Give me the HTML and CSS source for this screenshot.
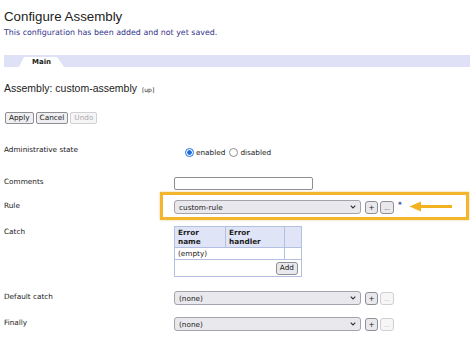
FILE: index.html
```html
<!DOCTYPE html>
<html>
<head>
    <title>Configure Assembly</title>
    <meta name="viewport" content="width=device-width, initial-scale=1">
    <link rel="stylesheet" href="styles.css">
</head>
<body>
    <h1>Configure Assembly</h1>
    <div class="notice">This configuration has been added and not yet saved.</div>

    <div class="tabs">
        <div class="tab">Main</div>
    </div>

    <h2>Assembly: custom-assembly <a href="#" class="up">[up]</a></h2>

    <div class="actions">
        <button>Apply</button>
        <button>Cancel</button>
        <button disabled>Undo</button>
    </div>

    <div class="form">
        <div class="row state">
            <label>Administrative state</label>
            <div class="value radios">
                <label class="radio"><input type="radio" name="state" checked>enabled</label>
                <label class="radio"><input type="radio" name="state">disabled</label>
            </div>
        </div>

        <div class="row">
            <label>Comments</label>
            <div class="value"><input type="text" class="text"></div>
        </div>

        <div class="row rule">
            <label>Rule</label>
            <div class="value pick marked">
                <div class="select">
                    <select><option>custom-rule</option></select>
                    <svg class="chevron" width="6" height="4" viewBox="0 0 6 4"><path d="M0.7 0.7 L3 3 L5.3 0.7" fill="none" stroke="#333" stroke-width="1.1"/></svg>
                </div>
                <button class="small">+</button>
                <button class="small wide">...</button>
                <span class="req">*</span>
                <div class="callout"></div>
                <svg class="arrow" width="44" height="11" viewBox="0 0 44 11">
                    <path d="M0.5 5.5 L12 0.5 L12 4 L43 4 L43 7 L12 7 L12 10.5 Z" fill="#f2b21f"/>
                </svg>
            </div>
        </div>

        <div class="row catch">
            <label>Catch</label>
            <div class="value">
                <table class="grid">
                    <thead>
                        <tr>
                            <th class="name">Error<br>name</th>
                            <th class="handler">Error<br>handler</th>
                            <th class="pad"></th>
                        </tr>
                    </thead>
                    <tbody>
                        <tr class="empty">
                            <td colspan="2">(empty)</td>
                            <td class="pad"></td>
                        </tr>
                        <tr class="add">
                            <td colspan="3"><button>Add</button></td>
                        </tr>
                    </tbody>
                </table>
            </div>
        </div>

        <div class="row">
            <label>Default catch</label>
            <div class="value pick">
                <div class="select">
                    <select><option>(none)</option></select>
                    <svg class="chevron" width="6" height="4" viewBox="0 0 6 4"><path d="M0.7 0.7 L3 3 L5.3 0.7" fill="none" stroke="#333" stroke-width="1.1"/></svg>
                </div>
                <button class="small">+</button>
                <button class="small wide" disabled>...</button>
            </div>
        </div>

        <div class="row">
            <label>Finally</label>
            <div class="value pick">
                <div class="select">
                    <select><option>(none)</option></select>
                    <svg class="chevron" width="6" height="4" viewBox="0 0 6 4"><path d="M0.7 0.7 L3 3 L5.3 0.7" fill="none" stroke="#333" stroke-width="1.1"/></svg>
                </div>
                <button class="small">+</button>
                <button class="small wide" disabled>...</button>
            </div>
        </div>
    </div>
</body>
</html>
```

FILE: styles.css
```css
body {
    margin: 0;
    padding: 0 4px;
    font-family: "DejaVu Sans", Verdana, sans-serif;
    font-size: 7.3px;
    color: #222;
    background: #fff;
}
h1 {
    font-family: "Liberation Sans", Arial, sans-serif;
    font-size: 13.3px;
    font-weight: normal;
    line-height: 16px;
    margin: 9px 0 0;
}
.notice {
    color: #35358c;
    font-size: 7.9px;
    line-height: 10px;
    margin-top: 3px;
}
.tabs {
    display: flex;
    align-items: flex-end;
    height: 12px;
    margin-top: 17px;
    background: #dfe2f6;
}
.tab {
    margin-left: 15px;
    width: 45px;
    height: 10px;
    line-height: 10px;
    background: #fff;
    font-weight: bold;
    font-size: 7px;
    text-align: center;
    clip-path: polygon(0 100%, 5px 0, calc(100% - 7px) 0, 100% 100%);
}
h2 {
    font-family: "Liberation Sans", Arial, sans-serif;
    font-size: 10.5px;
    font-weight: normal;
    line-height: 14px;
    margin: 14px 0 0;
}
.up {
    font-family: "DejaVu Sans", Verdana, sans-serif;
    font-size: 6px;
    color: #222;
    text-decoration: none;
    margin-left: 2px;
}
button {
    font-family: "DejaVu Sans", Verdana, sans-serif;
    font-size: 7.3px;
    color: #222;
    background: #efeff1;
    border: 1px solid #8e8e94;
    border-radius: 2px;
    padding: 0 3px;
    height: 12px;
    line-height: 10px;
}
button:disabled {
    color: #aaa;
    border-color: #cfcfd4;
    background: #f6f6f7;
}
.actions {
    display: flex;
    gap: 2px;
    margin: 15px 0 0 1px;
}
.form {
    display: flex;
    flex-direction: column;
    gap: 12px;
    margin-top: 20px;
}
.row {
    display: flex;
    align-items: center;
}
.row > label {
    width: 170px;
    flex-shrink: 0;
    line-height: 12px;
    margin-bottom: 2px;
}
.row.state {
    margin-bottom: 3px;
}
.row.state > label {
    margin-bottom: 5px;
}
.row.rule {
    margin-top: -2px;
}
.row.catch {
    align-items: flex-start;
    margin-bottom: 2px;
}
.row.catch > label {
    margin: 0;
}
.value {
    display: flex;
    align-items: center;
}
.radios {
    padding-left: 11px;
    gap: 4px;
    line-height: 12px;
}
.radio {
    display: flex;
    align-items: center;
}
.radio input {
    appearance: none;
    width: 9px;
    height: 9px;
    margin: 0 2px 0 0;
    border: 1px solid #8e8e94;
    border-radius: 50%;
    background: #fff;
}
.radio input:checked {
    border-color: #1c6fe3;
    background: radial-gradient(circle, #1c6fe3 0 2px, #fff 2.6px);
}
.text {
    width: 139px;
    height: 13px;
    box-sizing: border-box;
    border: 1px solid #8e8e94;
    border-radius: 2px;
    padding: 0 3px;
}
.pick {
    position: relative;
}
.select {
    position: relative;
    width: 187px;
}
.select select {
    appearance: none;
    width: 100%;
    height: 14px;
    margin: 0;
    padding: 0 4px;
    font-family: "DejaVu Sans", Verdana, sans-serif;
    font-size: 7.3px;
    color: #222;
    background: #e9e9ed;
    border: 1px solid #a3a3ab;
    border-radius: 3px;
}
.chevron {
    position: absolute;
    right: 5px;
    top: 5px;
}
.small {
    width: 13px;
    height: 13px;
    padding: 0;
    margin-left: 4px;
    border-radius: 3px;
    background: #e9e9ed;
    text-align: center;
    line-height: 11px;
}
.small.wide {
    width: 14px;
    margin-left: 2px;
    font-size: 6px;
}
.req {
    color: #3341a0;
    font-weight: bold;
    margin-left: 4px;
    align-self: flex-start;
    line-height: 10px;
}
.callout {
    position: absolute;
    left: -14px;
    top: -8px;
    width: 309px;
    height: 28px;
    box-sizing: border-box;
    border: 3px solid #f2b52c;
    box-shadow: 0 0 2px rgba(200, 150, 30, 0.5);
    pointer-events: none;
}
.arrow {
    position: absolute;
    left: 235px;
    top: 1px;
}
.grid {
    border-collapse: collapse;
    width: 128px;
    border: 1px solid #b4c0e2;
}
.grid th {
    background: #dfe4f7;
    font-weight: bold;
    text-align: left;
    vertical-align: top;
    height: 21px;
    line-height: 9px;
    padding: 1px 3px;
    border-left: 1px solid #b4c0e2;
    box-sizing: border-box;
}
.grid th.name {
    width: 54px;
}
.grid th.handler {
    width: 62px;
}
.grid .pad {
    width: 11px;
    border-left: 1px solid #b4c0e2;
}
.grid .empty td {
    height: 11px;
    line-height: 11px;
    padding: 0 3px;
    border-top: 1px solid #b4c0e2;
}
.grid .add td {
    text-align: right;
    padding: 1px 3px 1px 0;
    height: 14px;
    border-top: 1px solid #b4c0e2;
}
.grid .add button {
    height: 13px;
    padding: 0 3px;
    border-radius: 3px;
    background: #e9e9ed;
    vertical-align: middle;
}
```
